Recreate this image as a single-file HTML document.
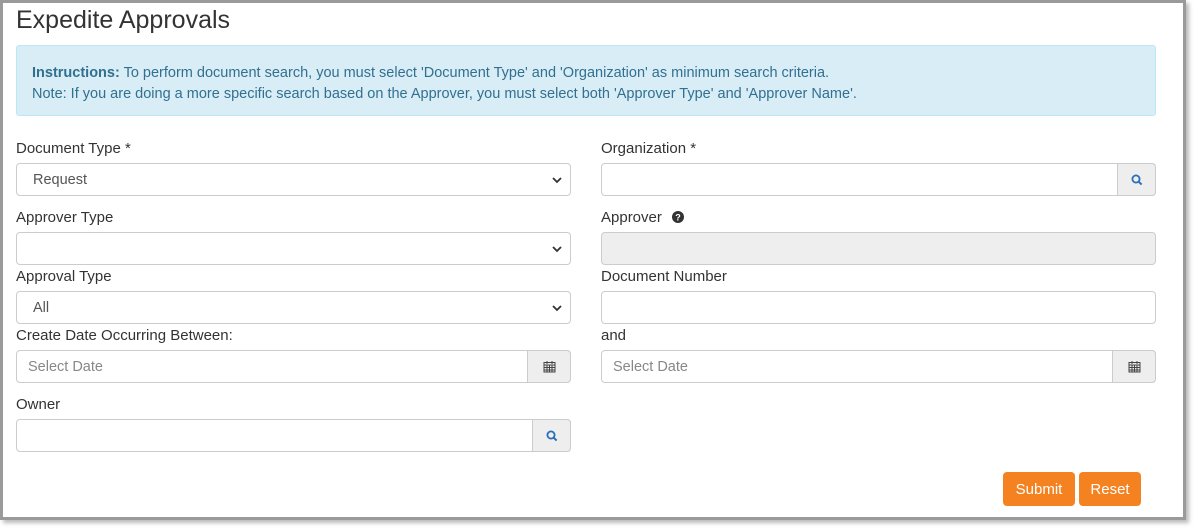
<!DOCTYPE html>
<html><head><style>
body{margin:0;width:1194px;height:531px;background:#fff;position:relative;font-family:"Liberation Sans",sans-serif;color:#333;overflow:hidden}
.frame{position:absolute;left:0;top:0;width:1180px;height:514px;border:3px solid #9a9a9a;box-shadow:3px 3px 4px #bbb;background:#fff}
.a{position:absolute}
h1{position:absolute;left:16px;top:6px;margin:0;font-weight:normal;font-size:25px;color:#333}
.info{left:16px;top:45px;width:1140px;height:71px;background:#d9edf7;border:1px solid #bce8f1;border-radius:3px;color:#31708f;font-size:14.5px;line-height:21px;box-sizing:border-box;padding:17px 15px}
.lbl{font-size:15px;color:#333;margin-top:1px}
.in{border:1px solid #ccc;border-radius:4px;box-sizing:border-box;height:33px;background:#fff;font-size:14.5px;color:#555;padding:0 16px;line-height:33px}
.ph{color:#888;padding-left:11px}
.btn{position:absolute;top:-1px;right:-1px;width:44px;height:33px;background:#eee;border:1px solid #ccc;border-radius:0 4px 4px 0;box-sizing:border-box;display:flex;align-items:center;justify-content:center}
.chev{position:absolute;right:8px;top:12px}
.ob{background:#f58220;color:#fff;font-size:15px;border-radius:4px;height:34px;line-height:35px;text-align:center}
</style></head><body>
<div class="frame"></div>
<h1>Expedite Approvals</h1>
<div class="a info"><b>Instructions:</b> To perform document search, you must select 'Document Type' and 'Organization' as minimum search criteria.<br>Note: If you are doing a more specific search based on the Approver, you must select both 'Approver Type' and 'Approver Name'.</div>

<div class="a lbl" style="left:16px;top:139px">Document Type *</div>
<div class="a in" style="left:16px;top:163px;width:555px">Request<svg class="chev" width="10" height="8" viewBox="0 0 10 8"><path d="M1 2l4 4 4-4" stroke="#333" stroke-width="1.8" fill="none"/></svg></div>
<div class="a lbl" style="left:601px;top:139px">Organization *</div>
<div class="a in" style="left:601px;top:163px;width:555px"><div class="btn" style="width:39px"><svg width="12" height="12" viewBox="0 0 12 12"><circle cx="5" cy="5" r="3.6" stroke="#2a6ebb" stroke-width="1.8" fill="none"/><path d="M7.6 7.6l3 3" stroke="#2a6ebb" stroke-width="2"/></svg></div></div>

<div class="a lbl" style="left:16px;top:208px">Approver Type</div>
<div class="a in" style="left:16px;top:232px;width:555px"><svg class="chev" width="10" height="8" viewBox="0 0 10 8"><path d="M1 2l4 4 4-4" stroke="#333" stroke-width="1.8" fill="none"/></svg></div>
<div class="a lbl" style="left:601px;top:208px">Approver <svg width="12" height="12" viewBox="0 0 12 12" style="vertical-align:-1px;margin-left:6px"><circle cx="6" cy="6" r="6" fill="#333"/><text x="6" y="9.5" font-size="9" font-weight="bold" text-anchor="middle" fill="#fff" font-family="Liberation Sans">?</text></svg></div>
<div class="a in" style="left:601px;top:232px;width:555px;background:#eee"></div>

<div class="a lbl" style="left:16px;top:267px">Approval Type</div>
<div class="a in" style="left:16px;top:291px;width:555px">All<svg class="chev" width="10" height="8" viewBox="0 0 10 8"><path d="M1 2l4 4 4-4" stroke="#333" stroke-width="1.8" fill="none"/></svg></div>
<div class="a lbl" style="left:601px;top:267px">Document Number</div>
<div class="a in" style="left:601px;top:291px;width:555px"></div>

<div class="a lbl" style="left:16px;top:326px">Create Date Occurring Between:</div>
<div class="a in ph" style="left:16px;top:350px;width:555px">Select Date<div class="btn"><svg width="13" height="13" viewBox="0 0 13 13"><rect x="1" y="2.5" width="11" height="9.5" fill="none" stroke="#444"/><path d="M1 5h11M1 7.5h11M1 10h11M4 5v7M6.5 5v7M9 5v7M4 1v3M9 1v3" stroke="#444"/></svg></div></div>
<div class="a lbl" style="left:601px;top:326px">and</div>
<div class="a in ph" style="left:601px;top:350px;width:555px">Select Date<div class="btn"><svg width="13" height="13" viewBox="0 0 13 13"><rect x="1" y="2.5" width="11" height="9.5" fill="none" stroke="#444"/><path d="M1 5h11M1 7.5h11M1 10h11M4 5v7M6.5 5v7M9 5v7M4 1v3M9 1v3" stroke="#444"/></svg></div></div>

<div class="a lbl" style="left:16px;top:395px">Owner</div>
<div class="a in" style="left:16px;top:419px;width:555px"><div class="btn" style="width:39px"><svg width="12" height="12" viewBox="0 0 12 12"><circle cx="5" cy="5" r="3.6" stroke="#2a6ebb" stroke-width="1.8" fill="none"/><path d="M7.6 7.6l3 3" stroke="#2a6ebb" stroke-width="2"/></svg></div></div>

<div class="a ob" style="left:1003px;top:472px;width:72px">Submit</div>
<div class="a ob" style="left:1079px;top:472px;width:62px">Reset</div>
</body></html>
